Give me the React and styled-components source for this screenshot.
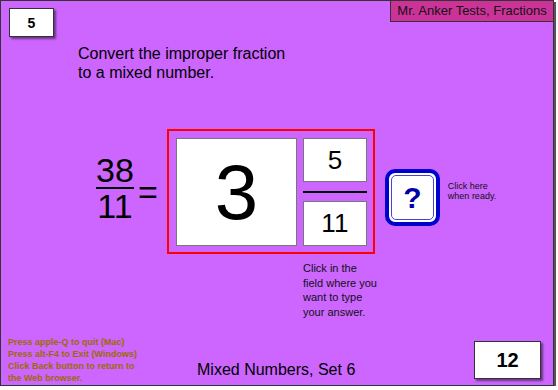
import styled, { createGlobalStyle } from "styled-components"

const GlobalStyle = createGlobalStyle`
  html, body {
    margin: 0;
    padding: 0;
    background: #ffffff;
  }
  body {
    font-family: "Liberation Sans", Arial, sans-serif;
    color: #000;
  }
`

const Frame = styled.div`
  box-sizing: border-box;
  width: 554px;
  height: 386px;
  background: #cc66ff;
  border: 1px solid #333;
  box-shadow: 2px 2px 0 #555;
  display: flex;
  flex-direction: column;
`

const Header = styled.div`
  display: flex;
  align-items: flex-start;
`

const NumberBox = styled.div`
  box-sizing: border-box;
  width: ${(p) => p.$w}px;
  height: ${(p) => p.$h}px;
  background: #fff;
  border: 1px solid #333;
  box-shadow: 2px 2px 2px rgba(40, 20, 50, 0.6);
  display: flex;
  align-items: center;
  justify-content: center;
  font-weight: bold;
  font-size: ${(p) => p.$size}px;
`

const Badge = styled(NumberBox)`
  margin: 7px 0 0 8px;
`

const TitleTag = styled.div`
  box-sizing: border-box;
  margin-left: auto;
  width: 163px;
  height: 21px;
  background: #cc3399;
  border-left: 1px solid #333;
  border-bottom: 1px solid #333;
  font-size: 13px;
  line-height: 20px;
  text-align: center;
  color: #111;
  white-space: nowrap;
`

const Prompt = styled.p`
  margin: 7px 0 0 77px;
  font-size: 16px;
  line-height: 19px;
`

const Workspace = styled.div`
  display: flex;
  align-items: flex-start;
  margin-top: 47px;
  padding-left: 95px;
`

const Fraction = styled.div`
  margin-top: 24px;
  width: 38px;
  display: flex;
  flex-direction: column;
  align-items: center;
  font-size: 34px;
  line-height: 34px;
`

const FractionBar = styled.div`
  width: 38px;
  height: 2px;
  background: #000;
`

const Equals = styled.span`
  align-self: center;
  margin-left: 4px;
  font-size: 34px;
  line-height: 34px;
`

const AnswerBox = styled.div`
  display: flex;
  gap: 6px;
  margin-left: 9px;
  padding: 7px 6px 6px 7px;
  border: 2px solid #ff0000;
`

const Field = styled.div`
  box-sizing: border-box;
  width: ${(p) => p.$w}px;
  height: ${(p) => p.$h}px;
  background: #fff;
  border: 1px solid #777;
  display: flex;
  align-items: center;
  justify-content: center;
  font-size: ${(p) => p.$size}px;
`

const PartColumn = styled.div`
  display: flex;
  flex-direction: column;
  justify-content: space-between;
  align-items: center;
  height: 108px;
`

const PartBar = styled.div`
  width: 64px;
  height: 2px;
  background: #000;
`

const ReadyButton = styled.button`
  box-sizing: border-box;
  width: 55px;
  height: 57px;
  margin: 40px 0 0 10px;
  padding: 2px;
  background: #fff;
  border: 4px solid #0000cc;
  border-radius: 10px;
  cursor: pointer;
`

const ReadyInner = styled.span`
  box-sizing: border-box;
  display: flex;
  align-items: center;
  justify-content: center;
  width: 100%;
  height: 100%;
  border: 1px solid #4444dd;
  border-radius: 5px;
  font-family: "Liberation Sans", Arial, sans-serif;
  font-weight: bold;
  font-size: 30px;
  color: #0000aa;
`

const SmallNote = styled.p`
  margin: ${(p) => p.$margin};
  font-size: ${(p) => p.$size}px;
  line-height: ${(p) => p.$lh}px;
  color: #111;
`

const Footer = styled.div`
  display: flex;
  align-items: flex-end;
  margin-top: auto;
`

const QuitNotes = styled.p`
  margin: 0 0 1px 7px;
  width: 140px;
  font-size: 9px;
  font-weight: bold;
  line-height: 12px;
  color: #9c6a00;
  white-space: nowrap;
`

const SetLabel = styled.div`
  margin: 0 0 6px 49px;
  font-size: 16px;
  line-height: 18px;
`

const PageBox = styled(NumberBox)`
  margin: 0 12px 6px auto;
`

export default function App() {
  return (
    <>
      <GlobalStyle />
      <Frame>
        <Header>
          <Badge $w={45} $h={29} $size={14}>5</Badge>
          <TitleTag>Mr. Anker Tests, Fractions</TitleTag>
        </Header>

        <Prompt>
          Convert the improper fraction
          <br />
          to a mixed number.
        </Prompt>

        <Workspace>
          <Fraction>
            <span>38</span>
            <FractionBar />
            <span>11</span>
          </Fraction>
          <Equals>=</Equals>
          <AnswerBox>
            <Field $w={121} $h={108} $size={78}>3</Field>
            <PartColumn>
              <Field $w={64} $h={44} $size={26}>5</Field>
              <PartBar />
              <Field $w={64} $h={45} $size={26}>11</Field>
            </PartColumn>
          </AnswerBox>
          <ReadyButton>
            <ReadyInner>?</ReadyInner>
          </ReadyButton>
          <SmallNote $margin="52px 0 0 8px" $size={9} $lh={10}>
            Click here
            <br />
            when ready.
          </SmallNote>
        </Workspace>

        <SmallNote $margin="7px 0 0 302px" $size={11} $lh={14.7}>
          Click in the
          <br />
          field where you
          <br />
          want to type
          <br />
          your answer.
        </SmallNote>

        <Footer>
          <QuitNotes>
            Press apple-Q to quit (Mac)
            <br />
            Press alt-F4 to Exit (Windows)
            <br />
            Click Back button to return to
            <br />
            the Web browser.
          </QuitNotes>
          <SetLabel>Mixed Numbers, Set 6</SetLabel>
          <PageBox $w={67} $h={38} $size={20}>12</PageBox>
        </Footer>
      </Frame>
    </>
  )
}
